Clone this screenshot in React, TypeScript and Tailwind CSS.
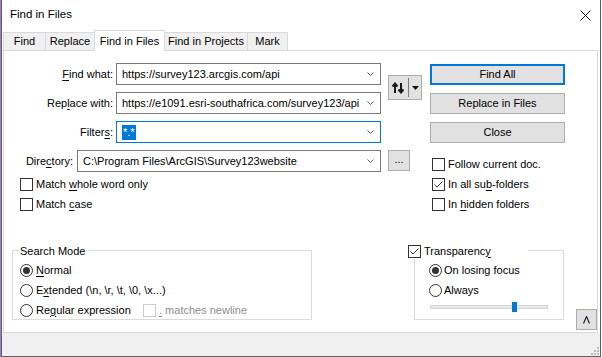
import React from 'react';

const Chevron: React.FC = () => (
  <svg width="7" height="4" viewBox="0 0 7 4" className="shrink-0">
    <path d="M0.5 0.5 L3.5 3.5 L6.5 0.5" fill="none" stroke="#5b5b5b" strokeWidth="1" />
  </svg>
);

const Check: React.FC<{ checked?: boolean; disabled?: boolean }> = ({ checked, disabled }) => (
  <span
    className={`flex h-[13px] w-[13px] shrink-0 items-center justify-center border bg-white ${
      disabled ? 'border-[#cccccc]' : 'border-[#333333]'
    }`}
  >
    {checked && (
      <svg width="9" height="7" viewBox="0 0 9 7">
        <path d="M0.5 3.5 L3 6 L8.5 0.5" fill="none" stroke="#333333" strokeWidth="1" />
      </svg>
    )}
  </span>
);

const Radio: React.FC<{ checked?: boolean }> = ({ checked }) => (
  <span className="flex h-[13px] w-[13px] shrink-0 items-center justify-center rounded-full border border-[#333333] bg-white">
    {checked && <span className="h-[7px] w-[7px] rounded-full bg-[#333333]" />}
  </span>
);

const Combo: React.FC<{ width: string; focused?: boolean; children: React.ReactNode }> = ({
  width,
  focused,
  children,
}) => (
  <div
    className={`flex h-[22px] items-center border bg-white pl-[5px] pr-[6px] ${
      focused ? 'border-[#0078d7]' : 'border-[#7a7a7a]'
    } ${width}`}
  >
    <div className="mr-[3px] flex-1 overflow-hidden whitespace-nowrap">{children}</div>
    <Chevron />
  </div>
);

const Btn: React.FC<{ primary?: boolean; children: React.ReactNode }> = ({ primary, children }) => (
  <button
    className={`flex h-[21px] w-[135px] items-center justify-center bg-[#e1e1e1] ${
      primary ? 'border-2 border-[#0078d7]' : 'border border-[#adadad]'
    }`}
  >
    {children}
  </button>
);

const Tab: React.FC<{ width: string; active?: boolean; children: React.ReactNode }> = ({
  width,
  active,
  children,
}) => (
  <div
    className={`-ml-[1px] flex items-center justify-center border-x border-t border-[#d9d9d9] first:ml-0 ${width} ${
      active ? 'relative z-10 -mb-[1px] h-[21px] bg-white' : 'h-[18px] bg-[#f0f0f0]'
    }`}
  >
    {children}
  </div>
);

const App: React.FC = () => {
  return (
    <div className="flex h-[357px] w-[602px] bg-white font-['Liberation_Sans',Arial,sans-serif] text-[11px] leading-none text-black">
      <div className="w-[1px] bg-[#9d7ad8]" />
      <div className="flex h-[357px] w-[600px] flex-col border-x border-b border-[#5f5f5f]">
        {/* title bar */}
        <div className="flex h-[30px] items-center pl-[8px]">
          <span className="text-[11.5px]">Find in Files</span>
          <svg width="11" height="11" viewBox="0 0 11 11" className="ml-auto mr-[9px]">
            <path d="M0.5 0.5 L10.5 10.5 M10.5 0.5 L0.5 10.5" stroke="#111" strokeWidth="1" />
          </svg>
        </div>

        {/* tabs */}
        <div className="flex h-[20px] items-end pl-[1px]">
          <Tab width="w-[43px]">Find</Tab>
          <Tab width="w-[50px]">Replace</Tab>
          <Tab width="w-[71px]" active>
            Find in Files
          </Tab>
          <Tab width="w-[84px]">Find in Projects</Tab>
          <Tab width="w-[41px]">Mark</Tab>
        </div>

        {/* panel */}
        <div className="ml-[1px] flex h-[283px] w-[595px] flex-col border border-[#d9d9d9] bg-white">
          {/* find / replace / filters */}
          <div className="mt-[12px] flex items-start">
            <div className="flex w-[377px] flex-col gap-[7px]">
              <div className="flex h-[22px] items-center">
                <span className="w-[109px] text-right">
                  <u className="underline-offset-2">F</u>ind what:
                </span>
                <div className="ml-[3px]">
                  <Combo width="w-[265px]">https://survey123.arcgis.com/api</Combo>
                </div>
              </div>
              <div className="flex h-[22px] items-center">
                <span className="w-[109px] text-right">
                  Rep<u className="underline-offset-2">l</u>ace with:
                </span>
                <div className="ml-[3px]">
                  <Combo width="w-[265px]">https://e1091.esri-southafrica.com/survey123/api</Combo>
                </div>
              </div>
              <div className="flex h-[22px] items-center">
                <span className="w-[109px] text-right">
                  Filter<u className="underline-offset-2">s</u>:
                </span>
                <div className="ml-[3px]">
                  <Combo width="w-[265px]" focused>
                    <span className="inline-flex h-[15px] items-center bg-[#0078d7] px-[1px] text-white">*.*</span>
                  </Combo>
                </div>
              </div>
            </div>

            {/* swap button */}
            <div className="ml-[7px] mt-[12px] flex h-[25px] w-[34px] items-center border border-[#adadad] bg-[#e1e1e1] pl-[3px]">
              <svg width="12" height="12" viewBox="0 0 12 12">
                <path d="M3 11 V2 M0.5 4.5 L3 1.5 L5.5 4.5" fill="none" stroke="#1a1a1a" strokeWidth="2" />
                <path d="M9 1 V10 M6.5 7.5 L9 10.5 L11.5 7.5" fill="none" stroke="#1a1a1a" strokeWidth="2" />
              </svg>
              <span className="ml-[4px] h-[19px] w-[1px] bg-[#7a7a7a]" />
              <svg width="7" height="4" viewBox="0 0 7 4" className="ml-[3px]">
                <path d="M0 0 H7 L3.5 4 Z" fill="#111" />
              </svg>
            </div>

            {/* action buttons */}
            <div className="ml-[8px] mt-[1px] flex flex-col gap-[8px]">
              <Btn primary>Find All</Btn>
              <Btn>Replace in Files</Btn>
              <Btn>Close</Btn>
            </div>
          </div>

          {/* directory + options */}
          <div className="mt-[7px] flex items-start">
            <div className="flex w-[377px] flex-col">
              <div className="flex h-[22px] items-center">
                <span className="w-[69px] text-right">
                  Dire<u className="underline-offset-2">c</u>tory:
                </span>
                <div className="ml-[4px]">
                  <Combo width="w-[304px]">C:\Program Files\ArcGIS\Survey123website</Combo>
                </div>
              </div>
              <div className="mt-[2px] flex flex-col pl-[16px]">
                <label className="flex h-[20px] items-center gap-[3px]">
                  <Check />
                  <span>
                    Match <u className="underline-offset-2">w</u>hole word only
                  </span>
                </label>
                <label className="flex h-[20px] items-center gap-[3px]">
                  <Check />
                  <span>
                    Match <u className="underline-offset-2">c</u>ase
                  </span>
                </label>
              </div>
            </div>

            <button className="ml-[7px] flex h-[21px] w-[22px] items-center justify-center border border-[#adadad] bg-[#e1e1e1] pb-[3px]">
              ...
            </button>

            <div className="ml-[22px] mt-[4px] flex flex-col">
              <label className="flex h-[20px] items-center gap-[3px]">
                <Check />
                <span>Follow current doc.</span>
              </label>
              <label className="flex h-[20px] items-center gap-[3px]">
                <Check checked />
                <span>
                  In all su<u className="underline-offset-2">b</u>-folders
                </span>
              </label>
              <label className="flex h-[20px] items-center gap-[3px]">
                <Check />
                <span>
                  In <u className="underline-offset-2">h</u>idden folders
                </span>
              </label>
            </div>
          </div>

          {/* group boxes */}
          <div className="mt-[36px] flex items-start">
            <div className="relative ml-[8px] h-[70px] w-[300px] border border-[#dcdcdc] pl-[7px] pt-[9px]">
              <span className="absolute -top-[8px] left-[6px] flex h-[16px] items-center bg-white px-[1px]">
                Search Mode
              </span>
              <div className="flex h-[20px] items-center gap-[3px]">
                <Radio checked />
                <span>
                  <u className="underline-offset-2">N</u>ormal
                </span>
              </div>
              <div className="flex h-[20px] items-center gap-[3px]">
                <Radio />
                <span>
                  E<u className="underline-offset-2">x</u>tended {'(\\n, \\r, \\t, \\0, \\x...)'}
                </span>
              </div>
              <div className="flex h-[20px] items-center">
                <Radio />
                <span className="ml-[3px] w-[107px]">
                  Re<u className="underline-offset-2">g</u>ular expression
                </span>
                <Check disabled />
                <span className="ml-[3px] text-[#8d8d8d]">
                  <u className="underline-offset-2">.</u> matches newline
                </span>
              </div>
            </div>

            <div className="relative ml-[102px] h-[70px] w-[150px] border border-[#dcdcdc] pl-[14px] pt-[9px]">
              <span className="absolute -left-[7px] -top-[8px] flex h-[16px] w-[120px] items-center gap-[3px] bg-white">
                <Check checked />
                <span>
                  Transparenc<u className="underline-offset-2">y</u>
                </span>
              </span>
              <div className="flex h-[20px] items-center gap-[2px]">
                <Radio checked />
                <span>On losing focus</span>
              </div>
              <div className="flex h-[20px] items-center gap-[2px]">
                <Radio />
                <span>Always</span>
              </div>
              <div className="relative ml-[1px] mt-[2px] flex h-[10px] w-[118px] items-center">
                <div className="h-[4px] w-full border border-[#d6d6d6] bg-[#e7eaea]" />
                <span className="absolute left-[82px] top-0 h-[10px] w-[5px] bg-[#0078d7]" />
              </div>
            </div>

            <button className="ml-[12px] mt-[59px] flex h-[21px] w-[21px] items-center justify-center border border-[#adadad] bg-[#e1e1e1]">
              <svg width="7" height="8" viewBox="0 0 7 8">
                <path d="M0.5 7.5 L3.5 0.5 L6.5 7.5" fill="none" stroke="#1a1a2e" strokeWidth="1.1" />
              </svg>
            </button>
          </div>
        </div>

        {/* status strip */}
        <div className="flex h-[23px] items-end justify-end bg-[#f0f0f0] pb-[1px] pr-[1px]">
          <svg width="9" height="9" viewBox="0 0 9 9">
            <rect x="7" y="1" width="2" height="2" fill="#bdbdbd" />
            <rect x="4" y="4" width="2" height="2" fill="#bdbdbd" />
            <rect x="7" y="4" width="2" height="2" fill="#bdbdbd" />
            <rect x="1" y="7" width="2" height="2" fill="#bdbdbd" />
            <rect x="4" y="7" width="2" height="2" fill="#bdbdbd" />
            <rect x="7" y="7" width="2" height="2" fill="#bdbdbd" />
          </svg>
        </div>
      </div>
      <div className="w-[1px]" />
    </div>
  );
};

export default App;
